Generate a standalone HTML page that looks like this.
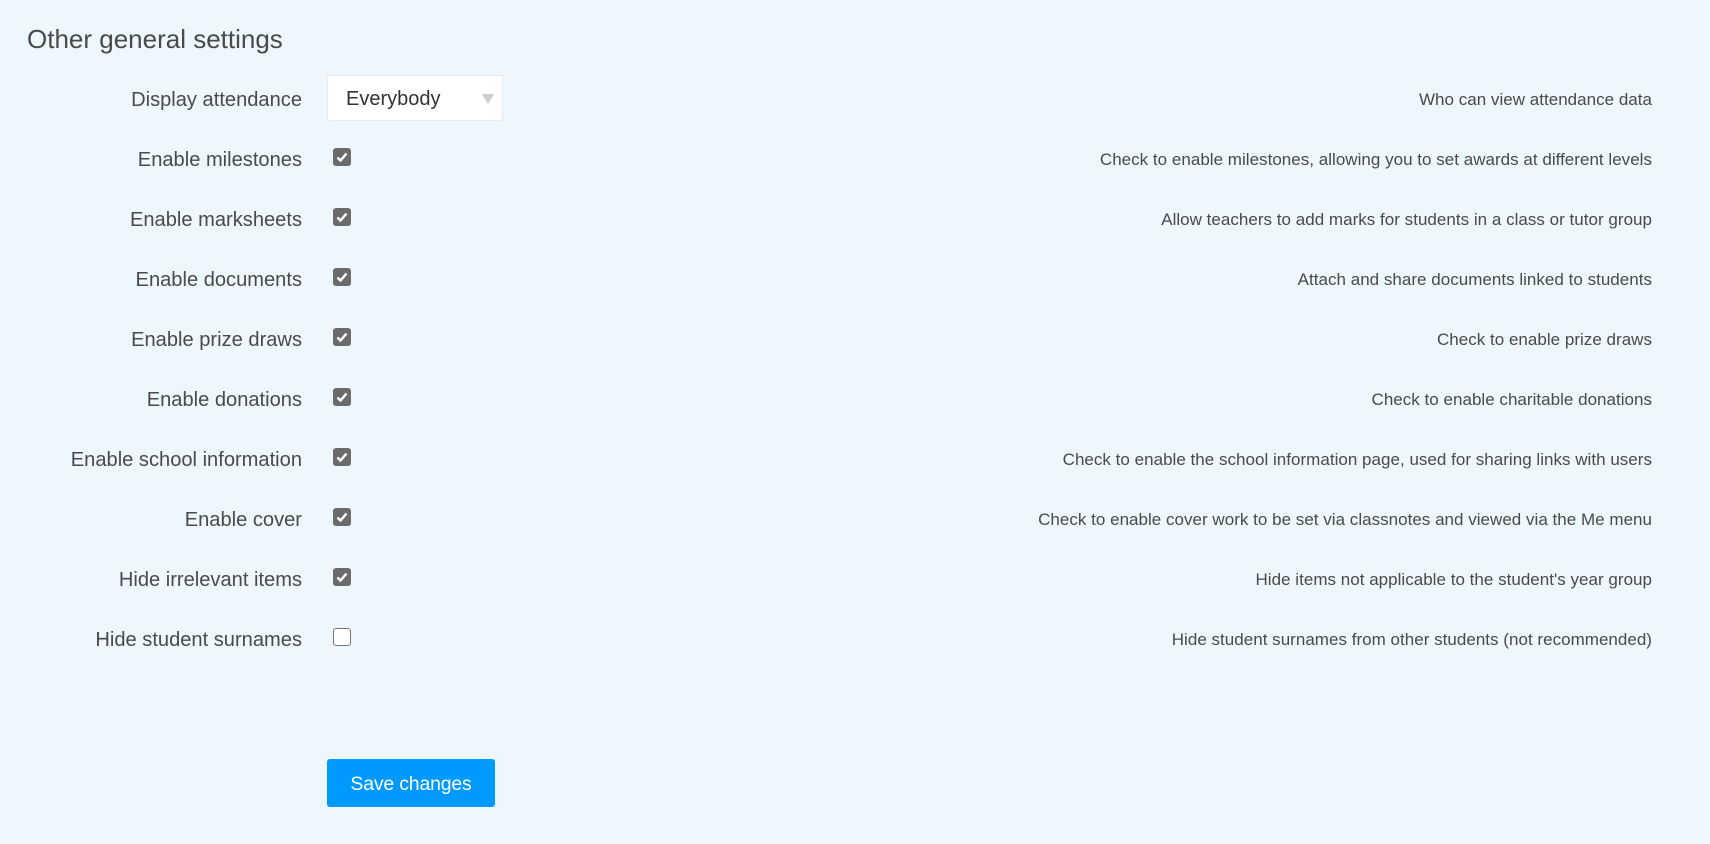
<!DOCTYPE html>
<html><head><meta charset="utf-8"><style>
html,body{margin:0;padding:0;}
body{width:1710px;height:844px;background:#eef6fe;font-family:"Liberation Sans",sans-serif;color:#4a4a4a;position:relative;overflow:hidden;}
h1{position:absolute;left:27px;top:24px;margin:0;font-weight:normal;font-size:26px;color:#4a4a4a;letter-spacing:0;}
.row{position:absolute;left:0;width:1710px;height:30px;}
.lab{position:absolute;right:1408px;top:1px;line-height:30px;font-size:20.1px;white-space:nowrap;color:#4a4a4a;letter-spacing:0;}
.desc{position:absolute;right:58px;top:1px;line-height:30px;font-size:17px;white-space:nowrap;color:#4a4a4a;letter-spacing:0.02px;}
.cb{position:absolute;left:333px;top:4px;width:18px;height:18px;border-radius:3px;background:#6b6b6b;box-sizing:border-box;}
.cb svg{position:absolute;left:2px;top:2px;}
.cb.off{background:#fff;border:1.5px solid #777;}
.sel{position:absolute;left:327px;top:75px;width:176px;height:46px;background:#fff;border:1px solid #e4eaf0;box-sizing:border-box;border-radius:2px;font-size:20px;line-height:46px;padding-left:18px;color:#333;}
.sel:after{content:"";position:absolute;right:8px;top:18px;border-left:6px solid transparent;border-right:6px solid transparent;border-top:10px solid #ccc;}
.btn{position:absolute;left:327px;top:759px;width:168px;height:48px;background:#0099fe;border-radius:3px;color:#fff;font-size:19.5px;line-height:50px;text-align:center;letter-spacing:-0.2px;}
</style></head><body>
<h1>Other general settings</h1>
<div class="row" style="top:84px"><div class="lab">Display attendance</div><div class="desc">Who can view attendance data</div></div>
<div class="sel">Everybody</div>

<div class="row" style="top:144px"><div class="lab">Enable milestones</div><div class="cb"><svg width="14" height="14" viewBox="0 0 14 14"><path d="M2.5 7.5 L5.5 10.5 L11.5 3.5" stroke="#fff" stroke-width="2.4" fill="none"/></svg></div><div class="desc">Check to enable milestones, allowing you to set awards at different levels</div></div>
<div class="row" style="top:204px"><div class="lab">Enable marksheets</div><div class="cb"><svg width="14" height="14" viewBox="0 0 14 14"><path d="M2.5 7.5 L5.5 10.5 L11.5 3.5" stroke="#fff" stroke-width="2.4" fill="none"/></svg></div><div class="desc">Allow teachers to add marks for students in a class or tutor group</div></div>
<div class="row" style="top:264px"><div class="lab">Enable documents</div><div class="cb"><svg width="14" height="14" viewBox="0 0 14 14"><path d="M2.5 7.5 L5.5 10.5 L11.5 3.5" stroke="#fff" stroke-width="2.4" fill="none"/></svg></div><div class="desc">Attach and share documents linked to students</div></div>
<div class="row" style="top:324px"><div class="lab">Enable prize draws</div><div class="cb"><svg width="14" height="14" viewBox="0 0 14 14"><path d="M2.5 7.5 L5.5 10.5 L11.5 3.5" stroke="#fff" stroke-width="2.4" fill="none"/></svg></div><div class="desc">Check to enable prize draws</div></div>
<div class="row" style="top:384px"><div class="lab">Enable donations</div><div class="cb"><svg width="14" height="14" viewBox="0 0 14 14"><path d="M2.5 7.5 L5.5 10.5 L11.5 3.5" stroke="#fff" stroke-width="2.4" fill="none"/></svg></div><div class="desc">Check to enable charitable donations</div></div>
<div class="row" style="top:444px"><div class="lab">Enable school information</div><div class="cb"><svg width="14" height="14" viewBox="0 0 14 14"><path d="M2.5 7.5 L5.5 10.5 L11.5 3.5" stroke="#fff" stroke-width="2.4" fill="none"/></svg></div><div class="desc">Check to enable the school information page, used for sharing links with users</div></div>
<div class="row" style="top:504px"><div class="lab">Enable cover</div><div class="cb"><svg width="14" height="14" viewBox="0 0 14 14"><path d="M2.5 7.5 L5.5 10.5 L11.5 3.5" stroke="#fff" stroke-width="2.4" fill="none"/></svg></div><div class="desc">Check to enable cover work to be set via classnotes and viewed via the Me menu</div></div>
<div class="row" style="top:564px"><div class="lab">Hide irrelevant items</div><div class="cb"><svg width="14" height="14" viewBox="0 0 14 14"><path d="M2.5 7.5 L5.5 10.5 L11.5 3.5" stroke="#fff" stroke-width="2.4" fill="none"/></svg></div><div class="desc">Hide items not applicable to the student's year group</div></div>
<div class="row" style="top:624px"><div class="lab">Hide student surnames</div><div class="cb off"></div><div class="desc">Hide student surnames from other students (not recommended)</div></div>

<div class="btn">Save changes</div>
</body></html>
